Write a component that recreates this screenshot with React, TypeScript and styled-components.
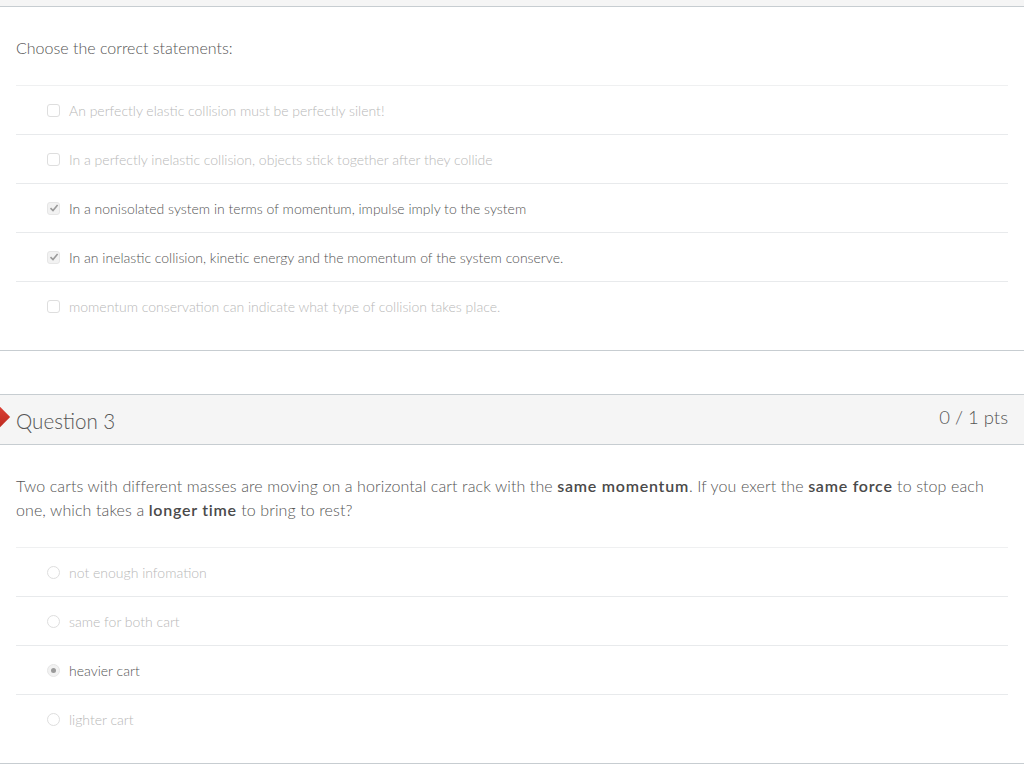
import React from "react";
import styled, { createGlobalStyle } from "styled-components";

const GlobalStyle = createGlobalStyle`
  body {
    margin: 0;
    background: #fff;
    font-family: Lato, "Open Sans", "Liberation Sans", sans-serif;
    font-weight: 300;
    color: #555;
  }
`;

const Page = styled.div`
  width: 1024px;
  overflow: hidden;
`;

const TopStrip = styled.div`
  height: 6px;
  background: #f5f5f5;
  border-bottom: 1px solid #c7cdd1;
`;

const QuestionBody = styled.div<{ $top: number }>`
  padding: ${(p) => p.$top}px 16px 20px;
  border-bottom: 1px solid #c7cdd1;
`;

const Prompt = styled.div<{ $size: number; $spacing?: number }>`
  font-size: ${(p) => p.$size}px;
  letter-spacing: ${(p) => p.$spacing ?? 0}px;
  line-height: 24px;
  color: #555;
  strong {
    font-weight: 600;
    color: #4a4a4a;
    letter-spacing: 0.75px;
  }
`;

const AnswerList = styled.div<{ $gap: number }>`
  margin-top: ${(p) => p.$gap}px;
`;

const AnswerRow = styled.div<{ $selected: boolean }>`
  height: 49px;
  box-sizing: border-box;
  border-top: 1px solid #e8eaec;
  display: flex;
  align-items: center;
  padding-left: 31px;
  gap: 9px;
  font-size: 14px;
  color: ${(p) => (p.$selected ? "#555" : "#b8b8b8")};
  &:first-child {
    border-top-color: #eff0f1;
  }
`;

const Box = styled.span<{ $round: boolean; $checked: boolean }>`
  width: 13px;
  height: 13px;
  box-sizing: border-box;
  border: 1px solid ${(p) => (p.$checked ? "#e6e6e6" : "#dedede")};
  border-radius: ${(p) => (p.$round ? "50%" : "3px")};
  background: ${(p) => (p.$checked ? "#f2f2f2" : "#fff")};
  display: flex;
  align-items: center;
  justify-content: center;
  flex-shrink: 0;
`;

const Dot = styled.span`
  width: 5px;
  height: 5px;
  border-radius: 50%;
  background: #9a9a9a;
`;

const Gap = styled.div`
  height: 43px;
`;

const Header = styled.div`
  position: relative;
  height: 49px;
  background: #f5f5f5;
  border-top: 1px solid #c7cdd1;
  border-bottom: 1px solid #c7cdd1;
  display: flex;
  align-items: center;
  justify-content: space-between;
  padding: 0 16px;
`;

const Title = styled.div`
  font-size: 20.6px;
  color: #555;
  padding-top: 3px;
`;

const Points = styled.div`
  font-size: 18.5px;
  color: #555;
  margin-top: -6px;
`;

const WrongMarker = styled.span`
  position: absolute;
  left: -14px;
  top: 12px;
  width: 20px;
  height: 20px;
  background: linear-gradient(135deg, #e0443a, #b8261c);
  transform: rotate(45deg);
`;

const Check = () => (
  <svg width="10" height="10" viewBox="0 0 10 10">
    <path d="M1.5 5.2 L4 7.6 L8.6 2" fill="none" stroke="#9a9a9a" strokeWidth="1.6" />
  </svg>
);

type Answer = { text: string; selected: boolean };

const q2: Answer[] = [
  { text: "An perfectly elastic collision must be perfectly silent!", selected: false },
  { text: "In a perfectly inelastic collision, objects stick together after they collide", selected: false },
  { text: "In a nonisolated system in terms of momentum, impulse imply to the system", selected: true },
  { text: "In an inelastic collision, kinetic energy and the momentum of the system conserve.", selected: true },
  { text: "momentum conservation can indicate what type of collision takes place.", selected: false },
];

const q3: Answer[] = [
  { text: "not enough infomation", selected: false },
  { text: "same for both cart", selected: false },
  { text: "heavier cart", selected: true },
  { text: "lighter cart", selected: false },
];

const Answers = ({ items, round, gap }: { items: Answer[]; round: boolean; gap: number }) => (
  <AnswerList $gap={gap}>
    {items.map((a) => (
      <AnswerRow key={a.text} $selected={a.selected}>
        <Box $round={round} $checked={a.selected}>
          {a.selected && (round ? <Dot /> : <Check />)}
        </Box>
        {a.text}
      </AnswerRow>
    ))}
  </AnswerList>
);

export default function App() {
  return (
    <Page>
      <GlobalStyle />
      <TopStrip />
      <QuestionBody $top={29}>
        <Prompt $size={16}>Choose the correct statements:</Prompt>
        <Answers items={q2} round={false} gap={25} />
      </QuestionBody>
      <Gap />
      <Header>
        <WrongMarker />
        <Title>Question 3</Title>
        <Points>0 / 1 pts</Points>
      </Header>
      <QuestionBody $top={29}>
        <Prompt $size={16} $spacing={0.1}>
          Two carts with different masses are moving on a horizontal cart rack with the{" "}
          <strong>same momentum</strong>. If you exert the <strong>same force</strong> to stop
          each one, which takes a <strong>longer time</strong> to bring to rest?
        </Prompt>
        <Answers items={q3} round={true} gap={25} />
      </QuestionBody>
    </Page>
  );
}
